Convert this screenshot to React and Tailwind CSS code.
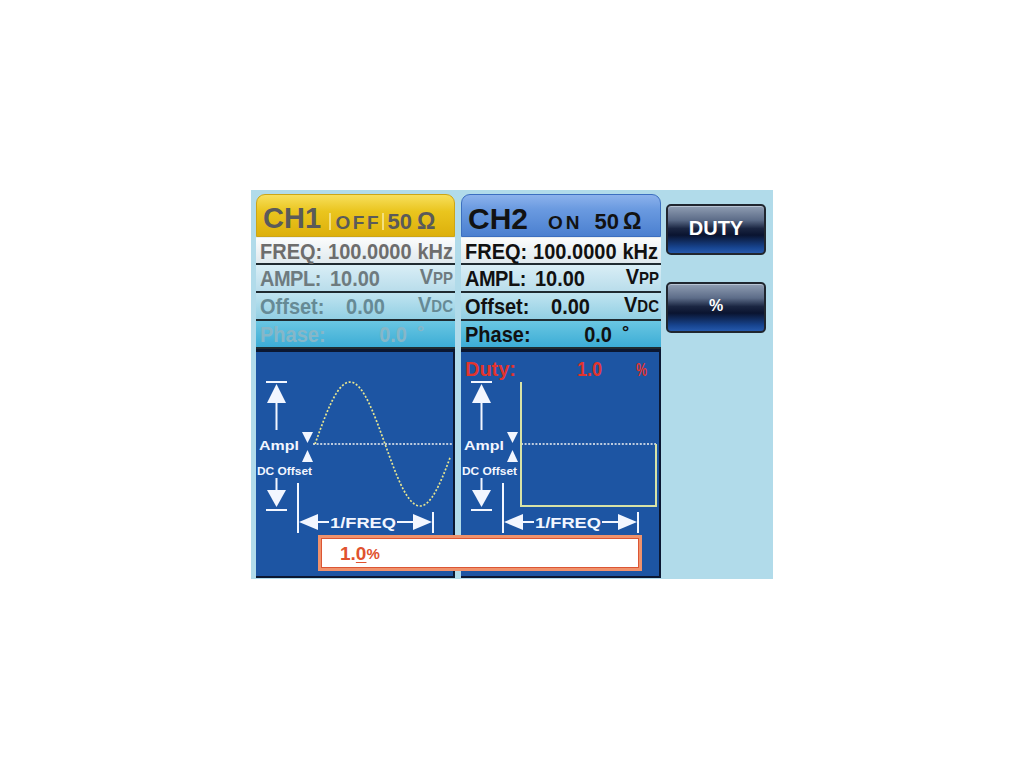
import React from "react";

const sinePath = (() => {
  const pts = [];
  for (let x = 59; x <= 194; x += 1) {
    const y = 92 - 62 * Math.sin((2 * Math.PI * (x - 59)) / 140);
    pts.push(`${x},${y.toFixed(2)}`);
  }
  return "M" + pts.join(" L");
})();

const FF = "Liberation Sans, Arial, sans-serif";

function Arrows() {
  const W = "#f2f6ff";
  return (
    <g>
      <line x1="10" y1="30" x2="31" y2="30" stroke={W} strokeWidth="2" />
      <polygon points="20.5,32 11,51 30,51" fill={W} />
      <line x1="20.5" y1="50" x2="20.5" y2="78" stroke={W} strokeWidth="2" />
      <polygon points="46,80 57,80 51.5,91" fill={W} />
      <text x="3" y="97.5" fill={W} fontSize="13" fontWeight="bold" fontFamily={FF} textLength="40" lengthAdjust="spacingAndGlyphs">Ampl</text>
      <polygon points="51.5,98 46,110 57,110" fill={W} />
      <text x="1" y="123" fill={W} fontSize="11.5" fontWeight="bold" fontFamily={FF} textLength="55" lengthAdjust="spacingAndGlyphs">DC Offset</text>
      <line x1="20.5" y1="126" x2="20.5" y2="140" stroke={W} strokeWidth="2" />
      <polygon points="11,138 30,138 20.5,155" fill={W} />
      <line x1="10" y1="158" x2="31" y2="158" stroke={W} strokeWidth="2" />
      <line x1="42" y1="131" x2="42" y2="181" stroke={W} strokeWidth="2" />
      <line x1="177" y1="160" x2="177" y2="181" stroke={W} strokeWidth="2" />
      <polygon points="43,170 62,162 62,178" fill={W} />
      <line x1="61" y1="170" x2="73" y2="170" stroke={W} strokeWidth="2" />
      <text x="74" y="176" fill={W} fontSize="15" fontWeight="bold" fontFamily={FF} textLength="66" lengthAdjust="spacingAndGlyphs">1/FREQ</text>
      <line x1="141" y1="170" x2="158" y2="170" stroke={W} strokeWidth="2" />
      <polygon points="176,170 157,162 157,178" fill={W} />
    </g>
  );
}

function WaveLeft() {
  return (
    <svg width="197" height="224" viewBox="0 0 197 224" className="block">
      <line x1="57" y1="92" x2="196" y2="92" stroke="#f4f4f4" strokeWidth="1.6" strokeDasharray="2 1.6" />
      <path d={sinePath} fill="none" stroke="#e8e690" strokeWidth="1.7" strokeDasharray="2 1.8" />
      <Arrows />
    </svg>
  );
}

function WaveRight() {
  return (
    <svg width="197" height="224" viewBox="0 0 197 224" className="block">
      <text x="4" y="24" fill="#e2342e" fontSize="21" fontWeight="bold" fontFamily={FF} textLength="51" lengthAdjust="spacingAndGlyphs">Duty:</text>
      <text x="116" y="24" fill="#e2342e" fontSize="21" fontWeight="bold" fontFamily={FF} textLength="25" lengthAdjust="spacingAndGlyphs">1.0</text>
      <text x="175" y="24" fill="#e2342e" fontSize="19" fontWeight="bold" fontFamily={FF} textLength="11" lengthAdjust="spacingAndGlyphs">%</text>
      <line x1="60" y1="92" x2="195" y2="92" stroke="#f4f4f4" strokeWidth="1.6" strokeDasharray="2 1.6" />
      <path d="M60,30 V154 H195 V92" fill="none" stroke="#d8e3a6" strokeWidth="2" />
      <Arrows />
    </svg>
  );
}

function Unit({ a, b }) {
  return (
    <span className="leading-none">
      <span className="text-[20px]">{a}</span>
      <span className="text-[15px]">{b}</span>
    </span>
  );
}

function Rows({ dim }) {
  const c1 = dim ? "text-[#6d6d6d]" : "text-[#111111]";
  const c2 = dim ? "text-[#6e7b7f]" : "text-[#111111]";
  const c3 = dim ? "text-[#668a95]" : "text-[#111111]";
  const c4 = dim ? "text-[#86b7c8]" : "text-[#111111]";
  return (
    <div className="flex flex-col font-bold">
      <div className={`h-[28px] flex items-center pl-[4px] pr-[2px] border-t border-[#e9eef0] border-b-2 border-b-[#1f2b31] bg-[linear-gradient(#fbfcfc,#dfe9ee)] ${c1}`}>
        <div className="w-[193px] flex justify-between text-[20px] leading-none scale-y-[1.12]">
          <span>FREQ:</span>
          <span>100.0000</span>
          <span>kHz</span>
        </div>
      </div>
      <div className={`h-[28px] flex items-center pl-[4px] pr-[2px] border-b-2 border-[#1f2b31] bg-[linear-gradient(#d9eef6,#b9ddeb)] ${c2}`}>
        <div className="w-[120px] flex justify-between text-[20px] leading-none scale-y-[1.12]">
          <span className="tracking-[-0.5px]">AMPL:</span>
          <span>10.00</span>
        </div>
        <div className="flex-1 text-right scale-y-[1.12]">
          <Unit a="V" b="PP" />
        </div>
      </div>
      <div className={`h-[28px] flex items-center pl-[4px] pr-[2px] border-b-2 border-[#1f2b31] bg-[linear-gradient(#c0e4f0,#92cfe3)] ${c3}`}>
        <div className="w-[125px] flex justify-between text-[20px] leading-none scale-y-[1.12]">
          <span>Offset:</span>
          <span>0.00</span>
        </div>
        <div className="flex-1 text-right scale-y-[1.12]">
          <Unit a="V" b="DC" />
        </div>
      </div>
      <div className={`h-[28px] flex items-center pl-[4px] pr-[2px] border-b-2 border-[#1f2b31] bg-[linear-gradient(#6ac6e2,#3cadd6)] ${c4}`}>
        <div className="w-[147px] flex justify-between text-[20px] leading-none scale-y-[1.12]">
          <span>Phase:</span>
          <span>0.0</span>
        </div>
        <span className="ml-[10px] text-[18px] leading-none -mt-[4px]">°</span>
      </div>
    </div>
  );
}

function Button({ children, size }) {
  return (
    <div className={`w-[100px] h-[51px] rounded-[5px] border-2 border-[#20262f] bg-[linear-gradient(#909eb3,#5c6c88_30%,#1a2541_48%,#0a1430_62%,#17448f_88%,#2559ad)] shadow-[inset_0_1px_0_#b8c4d4] flex items-center justify-center pb-[4px] text-white font-bold ${size}`}>
      {children}
    </div>
  );
}

export default function App() {
  return (
    <div className="min-h-screen bg-white font-['Liberation_Sans',Arial,sans-serif]">
      <div className="pt-[190px] pl-[251px]">
        <div className="relative w-[522px] h-[389px] bg-[#b1dbea] flex pt-[4px] pl-[5px]">
          {/* CH1 */}
          <div className="w-[199px] flex flex-col">
            <div className="h-[43px] rounded-t-[9px] border border-[#cda516] bg-[linear-gradient(#f7df5c,#eac51e_40%,#ddb00c)] flex items-end pb-[3px] pl-[6px] font-bold text-[#5a5a5a]">
              <span className="text-[29px] leading-none">CH1</span>
              <span className="w-[1.5px] h-[17px] bg-[#f4e07e] ml-[8px] mb-[3px]" />
              <span className="text-[19px] leading-none tracking-[2.5px] ml-[5px] mb-[1px]">OFF</span>
              <span className="w-[1.5px] h-[17px] bg-[#f4e07e] ml-[1px] mb-[3px]" />
              <span className="text-[22px] leading-none ml-[4px]">50</span>
              <span className="text-[23px] leading-none ml-[5px]">Ω</span>
            </div>
            <Rows dim />
            <div className="h-[229px] border-t-[3px] border-b-[2px] border-r-[2px] border-[#0b1731] bg-[#1d55a3]">
              <WaveLeft />
            </div>
          </div>
          {/* CH2 */}
          <div className="w-[200px] ml-[6px] flex flex-col">
            <div className="h-[43px] rounded-t-[9px] border border-[#3c6fc0] bg-[linear-gradient(#8cb2ec,#6a9ae0_35%,#4b80d0)] flex items-end pb-[2px] pl-[6px] font-bold text-[#121212]">
              <span className="text-[30px] leading-none">CH2</span>
              <span className="text-[19px] leading-none tracking-[3px] ml-[20px] mb-[2px]">ON</span>
              <span className="text-[22px] leading-none ml-[12px] mb-[1px]">50</span>
              <span className="text-[23px] leading-none ml-[4px] mb-[1px]">Ω</span>
            </div>
            <Rows />
            <div className="h-[229px] border-t-[3px] border-b-[2px] border-r-[2px] border-[#0b1731] bg-[#1d55a3]">
              <WaveRight />
            </div>
          </div>
          {/* Soft keys */}
          <div className="ml-[5px] pt-[10px] flex flex-col gap-[27px]">
            <Button size="text-[20px]">DUTY</Button>
            <Button size="text-[16px]">%</Button>
          </div>
          {/* Entry box */}
          <div className="absolute left-[67px] top-[345px] w-[324px] h-[36px] bg-white border-[3px] border-[#f0926c] shadow-[inset_0_0_0_1px_#dc5634] flex items-center pl-[19px] font-bold text-[#e0522e]">
            <span className="text-[19px] leading-none">1.</span>
            <span className="text-[19px] leading-none underline underline-offset-2">0</span>
            <span className="text-[15px] leading-none">%</span>
          </div>
        </div>
      </div>
    </div>
  );
}
